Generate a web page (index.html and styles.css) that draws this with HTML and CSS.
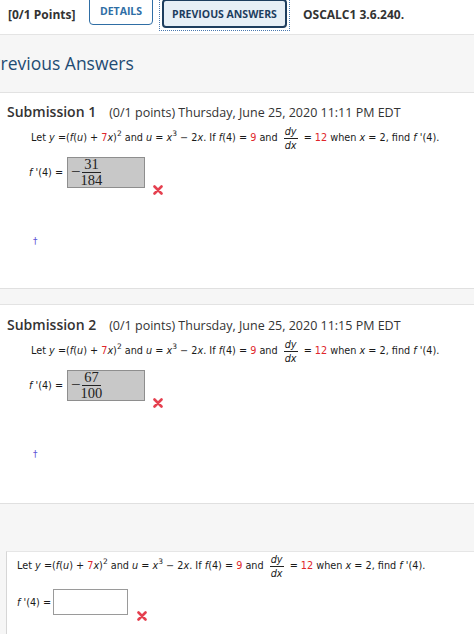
FILE: index.html
```html
<!DOCTYPE html>
<html>
<head>
<meta charset="utf-8">
<link rel="stylesheet" href="styles.css">
</head>
<body>
<div class="topbar">
  <span class="points">[0/1 Points]</span>
  <span class="btn btn-details">DETAILS</span>
  <span class="focus"><span class="btn btn-prev">PREVIOUS ANSWERS</span></span>
  <span class="code">OSCALC1 3.6.240.</span>
</div>

<div class="band band-title"><h1 class="title">Previous Answers</h1></div>

<section class="submission sub1">
  <div class="subhead"><span class="subname">Submission 1</span><span class="submeta">(0/1 points) Thursday, June 25, 2020 11:11 PM EDT</span></div>
  <div class="problem">
    <p class="q">Let <i>y</i> =(<i>f</i>(<i>u</i>) + <span class="red">7</span><i>x</i>)<sup>2</sup> and <i>u</i> = <i>x</i><sup>3</sup> − 2<i>x</i>. If <i>f</i>(4) = <span class="red">9</span> and <span class="frac"><span class="num"><i>dy</i></span><span class="den"><i>dx</i></span></span> = <span class="red">12</span> when <i>x</i> = 2, find <i>f</i> '(4).</p>
    <div class="answer">
      <span class="lbl"><i>f</i> '(4) =</span>
      <span class="box filled"><span class="minus">−</span><span class="mfrac"><span class="mnum">31</span><span class="mden">184</span></span></span>
      <svg class="xmark" width="10" height="10" viewBox="0 0 10 10"><path d="M1.5 1.5 L8.5 8.5 M8.5 1.5 L1.5 8.5" stroke="#e5404f" stroke-width="2.6" stroke-linecap="round"/></svg>
    </div>
    <div class="dagger">†</div>
  </div>
</section>

<div class="band band-sep"></div>

<section class="submission sub2">
  <div class="subhead"><span class="subname">Submission 2</span><span class="submeta">(0/1 points) Thursday, June 25, 2020 11:15 PM EDT</span></div>
  <div class="problem">
    <p class="q">Let <i>y</i> =(<i>f</i>(<i>u</i>) + <span class="red">7</span><i>x</i>)<sup>2</sup> and <i>u</i> = <i>x</i><sup>3</sup> − 2<i>x</i>. If <i>f</i>(4) = <span class="red">9</span> and <span class="frac"><span class="num"><i>dy</i></span><span class="den"><i>dx</i></span></span> = <span class="red">12</span> when <i>x</i> = 2, find <i>f</i> '(4).</p>
    <div class="answer">
      <span class="lbl"><i>f</i> '(4) =</span>
      <span class="box filled"><span class="minus">−</span><span class="mfrac"><span class="mnum">67</span><span class="mden">100</span></span></span>
      <svg class="xmark" width="10" height="10" viewBox="0 0 10 10"><path d="M1.5 1.5 L8.5 8.5 M8.5 1.5 L1.5 8.5" stroke="#e5404f" stroke-width="2.6" stroke-linecap="round"/></svg>
    </div>
    <div class="dagger">†</div>
  </div>
</section>

<div class="band band-bottom">
  <div class="card">
    <p class="q">Let <i>y</i> =(<i>f</i>(<i>u</i>) + <span class="red">7</span><i>x</i>)<sup>2</sup> and <i>u</i> = <i>x</i><sup>3</sup> − 2<i>x</i>. If <i>f</i>(4) = <span class="red">9</span> and <span class="frac"><span class="num"><i>dy</i></span><span class="den"><i>dx</i></span></span> = <span class="red">12</span> when <i>x</i> = 2, find <i>f</i> '(4).</p>
    <div class="answer answer-empty">
      <span class="lbl"><i>f</i> '(4) =</span>
      <span class="box empty"></span>
      <svg class="xmark" width="10" height="10" viewBox="0 0 10 10"><path d="M1.5 1.5 L8.5 8.5 M8.5 1.5 L1.5 8.5" stroke="#e5404f" stroke-width="2.6" stroke-linecap="round"/></svg>
    </div>
  </div>
</div>
</body>
</html>
```
FILE: styles.css
```css
* { box-sizing: border-box; }
html, body { margin: 0; padding: 0; background: #fff; }
body { font-family: "Open Sans", "DejaVu Sans", sans-serif; color: #333; width: 474px; height: 634px; overflow: hidden; }

.topbar {
  height: 35px;
  display: flex;
  align-items: flex-start;
  padding-left: 8px;
  border-bottom: 1px solid #e4e4e4;
}
.points { font-weight: 700; font-size: 12px; color: #333; margin-top: 6px; width: 81px; }
.btn {
  display: flex; align-items: center; justify-content: center;
  font-weight: 700; font-size: 10.5px; border-radius: 4px;
}
.btn-details {
  margin-top: -4px; width: 64px; height: 29px;
  border: 1.5px solid #2f6ea5; color: #2f6ea5; background: #fff;
}
.focus {
  margin-top: -4px; margin-left: 6px; padding: 2px;
  border: 1px dotted #4a79b0;
}
.btn-prev {
  width: 125px; height: 29px; padding-top: 1px;
  border: 2px solid #1d3d5e; color: #1d3d5e; background: #e7eff6;
}
.code { font-weight: 700; font-size: 12px; color: #333; margin-top: 6px; margin-left: 13px; }

.band { background: #f6f6f6; }
.band-title {
  height: 58px;
  border-bottom: 1px solid #e2e2e2;
  display: flex; align-items: center;
}
.title {
  margin: 0; font-weight: 400; font-size: 17.5px; color: #1e4b73;
  text-indent: -10px; padding-bottom: 2px;
}

.submission { padding-left: 7px; }
.sub1 { height: 195px; padding-top: 9px; }
.sub2 { height: 198px; padding-top: 10px; }
.subhead { display: flex; align-items: baseline; height: 22px; }
.subname { font-weight: 600; font-size: 14px; color: #333; }
.submeta { font-size: 12.5px; color: #333; margin-left: 13px; }

.problem { padding-left: 24px; }
.q {
  margin: 0; font-family: "DejaVu Sans", Verdana, sans-serif; font-size: 9.7px; color: #1a1a1a;
  white-space: pre; height: 28px; line-height: 28px;
}
.q sup { font-size: 7.5px; line-height: 0; vertical-align: 5px; }
.red { color: #e0262b; }
.frac { display: inline-flex; flex-direction: column; align-items: center; margin: 0 3px; line-height: 11px; vertical-align: middle; }
.frac .num { border-bottom: 1px solid #222; padding: 0 1px 1px; }
.frac .den { padding-top: 1px; }

.answer { display: flex; align-items: center; margin-top: 3px; height: 34px; }
.lbl { font-family: "DejaVu Sans", Verdana, sans-serif; font-size: 9.7px; color: #1a1a1a; width: 38px; margin-left: -2px; white-space: pre; }
.box { display: inline-flex; align-items: center; }
.filled {
  width: 78px; height: 31px; background: #c8c8c8; border: 1px solid #8e8e8e;
  font-family: "Liberation Serif", serif; color: #222; padding-left: 3px;
}
.minus { font-size: 17px; margin-right: 0; }
.mfrac { display: inline-flex; flex-direction: column; align-items: center; font-size: 14.5px; line-height: 13px; }
.mnum { border-bottom: 1px solid #222; padding: 0 2px 1px; }
.mden { padding-top: 1px; }
.xmark { margin-left: 8px; align-self: flex-end; margin-bottom: -6px; }

.dagger { color: #5b55d6; font-size: 9px; margin-top: 47px; margin-left: 2px; font-family: "DejaVu Sans", sans-serif; }

.band-sep { height: 17px; border-top: 1px solid #e0e0e0; border-bottom: 1px solid #e3e3e3; }

.band-bottom { padding-top: 47px; border-top: 1px solid #e0e0e0; height: 132px; }
.card {
  background: #fff; margin-left: 6px; border-left: 1px solid #d6d6d6; border-top: 1px solid #e6e6e6;
  height: 100%; padding-left: 10px; padding-top: 0;
}
.answer-empty { margin-top: 8px; height: 28px; }
.answer-empty .lbl { margin-left: 0; width: 36px; }
.empty { width: 75px; height: 26px; background: #fff; border: 1px solid #9a9a9a; }
.answer-empty .xmark { margin-left: 9px; margin-bottom: -5px; }
```
